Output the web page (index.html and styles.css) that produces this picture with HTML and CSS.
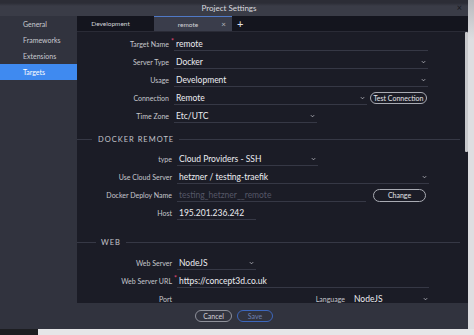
FILE: index.html
```html
<!DOCTYPE html>
<html lang="en">
<head>
    <meta charset="UTF-8">
    <meta name="viewport" content="width=device-width, initial-scale=1.0">
    <title>Project Settings</title>
    <link rel="stylesheet" href="styles.css">
</head>
<body>
    <div class="screen">
        <div class="window">
            <div class="titlebar">
                <span class="title">Project Settings</span>
                <span class="close">&times;</span>
            </div>
            <div class="window-body">
                <ul class="sidebar">
                    <li>General</li>
                    <li>Frameworks</li>
                    <li>Extensions</li>
                    <li class="active">Targets</li>
                </ul>
                <div class="main">
                    <div class="tabs">
                        <div class="tab">Development</div>
                        <div class="tab active">remote<span class="tab-close">&times;</span></div>
                        <div class="tab-add">+</div>
                    </div>
                    <div class="content">
                        <form class="form">
                            <div class="group">
                                <div class="row">
                                    <label class="label">Target Name<span class="req">*</span></label>
                                    <div class="field w-wide"><span class="value">remote</span></div>
                                </div>
                                <div class="row">
                                    <label class="label">Server Type</label>
                                    <div class="field w-wide"><span class="value">Docker</span>
                                        <svg class="chev" viewBox="0 0 6 4"><path d="M1 1l2 2 2-2"/></svg></div>
                                </div>
                                <div class="row">
                                    <label class="label">Usage</label>
                                    <div class="field w-wide"><span class="value">Development</span>
                                        <svg class="chev" viewBox="0 0 6 4"><path d="M1 1l2 2 2-2"/></svg></div>
                                </div>
                                <div class="row">
                                    <label class="label">Connection</label>
                                    <div class="field w-conn"><span class="value">Remote</span>
                                        <svg class="chev" viewBox="0 0 6 4"><path d="M1 1l2 2 2-2"/></svg></div>
                                    <button type="button" class="pill pill-test">Test Connection</button>
                                </div>
                                <div class="row">
                                    <label class="label">Time Zone</label>
                                    <div class="field w-short"><span class="value">Etc/UTC</span>
                                        <svg class="chev" viewBox="0 0 6 4"><path d="M1 1l2 2 2-2"/></svg></div>
                                </div>
                            </div>

                            <div class="section section-docker">
                                <span class="section-line lead"></span>
                                <span class="section-title">DOCKER REMOTE</span>
                                <span class="section-line"></span>
                            </div>

                            <div class="group shifted">
                                <div class="row">
                                    <label class="label">type</label>
                                    <div class="field w-short2"><span class="value">Cloud Providers - SSH</span>
                                        <svg class="chev" viewBox="0 0 6 4"><path d="M1 1l2 2 2-2"/></svg></div>
                                </div>
                                <div class="row">
                                    <label class="label">Use Cloud Server</label>
                                    <div class="field w-wide2"><span class="value">hetzner / testing-traefik</span>
                                        <svg class="chev" viewBox="0 0 6 4"><path d="M1 1l2 2 2-2"/></svg></div>
                                </div>
                                <div class="row">
                                    <label class="label">Docker Deploy Name</label>
                                    <div class="field w-deploy"><span class="value placeholder">testing_hetzner__remote</span></div>
                                    <button type="button" class="pill pill-change">Change</button>
                                </div>
                                <div class="row">
                                    <label class="label">Host</label>
                                    <div class="field w-tiny"><span class="value">195.201.236.242</span></div>
                                </div>
                            </div>

                            <div class="section section-web">
                                <span class="section-line lead"></span>
                                <span class="section-title">WEB</span>
                                <span class="section-line"></span>
                            </div>

                            <div class="group shifted">
                                <div class="row">
                                    <label class="label">Web Server</label>
                                    <div class="field w-tiny"><span class="value">NodeJS</span>
                                        <svg class="chev" viewBox="0 0 6 4"><path d="M1 1l2 2 2-2"/></svg></div>
                                </div>
                                <div class="row">
                                    <label class="label">Web Server URL<span class="req">*</span></label>
                                    <div class="field w-wide2"><span class="value">https://concept3d.co.uk</span></div>
                                </div>
                                <div class="row">
                                    <label class="label">Port</label>
                                    <div class="field w-tiny"></div>
                                    <label class="label label-lang">Language</label>
                                    <div class="field w-lang"><span class="value">NodeJS</span>
                                        <svg class="chev" viewBox="0 0 6 4"><path d="M1 1l2 2 2-2"/></svg></div>
                                </div>
                            </div>
                        </form>
                        <div class="scrollbar"><div class="thumb"></div></div>
                    </div>
                </div>
            </div>
            <div class="footer">
                <button type="button" class="pill pill-cancel">Cancel</button>
                <button type="button" class="pill pill-save">Save</button>
            </div>
        </div>
        <div class="edge"></div>
    </div>
    <div class="dock"><div class="dock-left"></div></div>
</body>
</html>
```

FILE: styles.css
```css
* {
    box-sizing: border-box;
}

body {
    margin: 0;
    width: 474px;
    height: 335px;
    overflow: hidden;
    background-color: #e4e4e6;
    font-family: Lato, "Noto Sans", sans-serif;
}

.screen {
    display: flex;
    height: 329px;
}

.window {
    width: 468px;
    height: 329px;
    background-color: #31333e;
    display: flex;
    flex-direction: column;
}

.edge {
    flex: 1;
    background: linear-gradient(#b9babe, #dedee1 40px);
}

.dock {
    height: 6px;
    background-color: #e6e6e8;
}

.dock-left {
    width: 38px;
    height: 100%;
    background-color: #1d1e22;
}

/* title bar */
.titlebar {
    position: relative;
    height: 16px;
    flex-shrink: 0;
    display: flex;
    align-items: center;
    justify-content: center;
    padding-right: 10px;
    background: linear-gradient(#2c2d36 0, #2c2d36 3px, #3a3c47 6px);
    color: #d9d9de;
    font-size: 8px;
}

.titlebar .close {
    position: absolute;
    right: 6px;
    top: 3px;
    color: #17181e;
    font-size: 9px;
    line-height: 9px;
}

.window-body {
    display: flex;
    height: 287px;
}

/* sidebar */
.sidebar {
    width: 77px;
    flex-shrink: 0;
    margin: 0;
    padding: 0;
    list-style: none;
}

.sidebar li {
    height: 16px;
    line-height: 16px;
    padding-left: 23px;
    font-size: 7px;
    color: #c9cad0;
}

.sidebar li.active {
    background-color: #3f8af0;
    color: #ffffff;
}

/* main */
.main {
    flex: 1;
    display: flex;
    flex-direction: column;
    background-color: #1b1c26;
    overflow: hidden;
}

.tabs {
    height: 16px;
    flex-shrink: 0;
    display: flex;
    align-items: center;
    background-color: #14151e;
    border-bottom: 1px solid #2a2b36;
}

.tab {
    position: relative;
    width: 77px;
    height: 100%;
    display: flex;
    align-items: center;
    justify-content: center;
    padding-right: 10px;
    font-size: 6.5px;
    color: #d3d3d9;
}

.tab.active {
    width: 78px;
    background-color: #3a3d4b;
    border-top: 1px solid #5079c6;
}

.tab-close {
    position: absolute;
    right: 6px;
    top: 2px;
    font-size: 8px;
    color: #b4b5bd;
}

.tab-add {
    margin-left: 5px;
    font-size: 11px;
    line-height: 11px;
    color: #e2e2e8;
}

.content {
    flex: 1;
    display: flex;
    overflow: hidden;
}

.form {
    flex: 1;
    margin: 0;
    padding: 3px 3px 0 0;
}

.scrollbar {
    width: 5px;
    padding-left: 2px;
}

.thumb {
    width: 3px;
    height: 120px;
    background-color: #c8c8cc;
    border-radius: 1px;
}

/* rows */
.row {
    height: 18px;
    display: flex;
    align-items: center;
}

.label {
    position: relative;
    width: 92px;
    flex-shrink: 0;
    text-align: right;
    font-size: 7px;
    color: #c6c7cd;
}

.shifted .label {
    width: 95px;
}

.req {
    position: absolute;
    right: -5px;
    top: -3px;
    color: #e2487a;
    font-size: 7px;
}

.field {
    height: 13px;
    margin-left: 5px;
    padding: 0 2px;
    display: flex;
    align-items: center;
    justify-content: space-between;
    border-bottom: 1px solid #363845;
}

.value {
    font-size: 8.5px;
    color: #ececf1;
    white-space: nowrap;
}

.value.placeholder {
    color: #555766;
}

.chev {
    width: 5px;
    height: 4px;
    fill: none;
    stroke: #b9bac2;
    stroke-width: 1;
}

.w-wide { width: 254px; }
.w-conn { width: 193px; }
.w-short { width: 143px; }
.w-short2 { width: 141px; }
.w-wide2 { width: 252px; }
.w-deploy { width: 189px; }
.w-tiny { width: 79px; }
.w-lang { width: 78px; margin-left: 7px; }

.shifted .label.label-lang {
    width: 89px;
}

/* buttons */
.pill {
    height: 12px;
    padding: 0;
    border: 1px solid #a9abb3;
    border-radius: 7px;
    background: transparent;
    font-family: inherit;
    font-size: 7px;
    line-height: 10px;
    color: #e4e4ea;
}

.pill-test {
    width: 57px;
    margin-left: 3px;
}

.pill-change {
    width: 53px;
    height: 13px;
    margin-left: 7px;
}

/* section headers */
.section {
    display: flex;
    align-items: center;
    height: 23px;
}

.section-docker {
    height: 25px;
    padding-top: 3px;
}

.section-web {
    height: 32px;
    padding-top: 9px;
}

.section-line {
    flex: 1;
    height: 1px;
    background-color: #363845;
}

.section-line.lead {
    flex: none;
    width: 15px;
}

.section-web .section-line.lead {
    width: 19px;
}

.section-title {
    padding: 0 5px 0 6px;
    font-size: 7.5px;
    letter-spacing: 1px;
    color: #c3c4cb;
}

.section-web .section-title {
    padding-left: 5px;
}

/* footer */
.footer {
    height: 26px;
    display: flex;
    align-items: center;
    justify-content: center;
    gap: 5px;
}

.pill-cancel {
    width: 37px;
    border-color: #8f919b;
    color: #d2d2d8;
}

.pill-save {
    width: 36px;
    border-color: #3d67bd;
    color: #6d82b3;
}
```
